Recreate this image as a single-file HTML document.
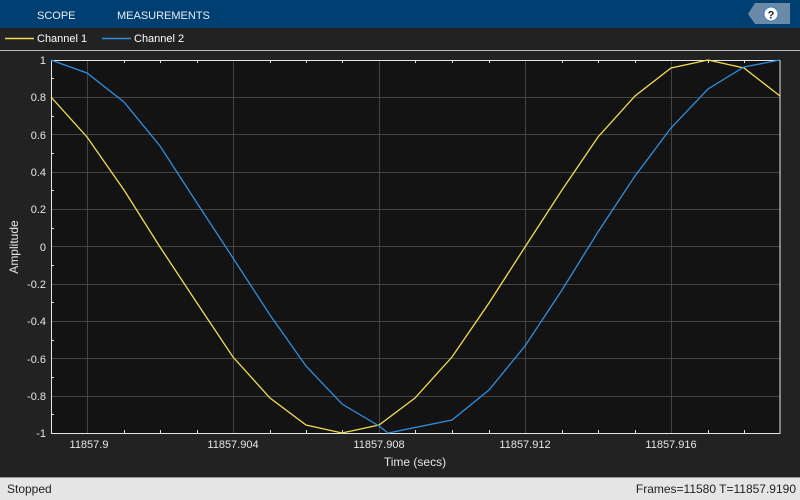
<!DOCTYPE html>
<html><head><style>
html,body{margin:0;width:800px;height:500px;overflow:hidden;background:#222;font-family:"Liberation Sans",sans-serif}
svg{display:block}
</style></head><body>
<svg width="800" height="500" xmlns="http://www.w3.org/2000/svg" font-family="Liberation Sans, sans-serif">
<rect width="800" height="500" fill="#222"/>
<rect width="800" height="28" fill="#003f72"/>
<text x="37" y="19" font-size="11" fill="#e8eef5">SCOPE</text>
<text x="117" y="19" font-size="11" fill="#e8eef5">MEASUREMENTS</text>
<polygon points="748,14 755,3 790,3 790,24 755,24" fill="#6b8aa8"/>
<circle cx="771" cy="14" r="7" fill="#fff" stroke="#3a7fc0" stroke-width="1"/>
<text x="771" y="18.5" font-size="11" font-weight="bold" fill="#222" text-anchor="middle">?</text>
<line x1="5" y1="38.5" x2="34" y2="38.5" stroke="#f3dc4e" stroke-width="1.5"/>
<text x="37" y="42" font-size="11" fill="#fff">Channel 1</text>
<line x1="102" y1="38.5" x2="131" y2="38.5" stroke="#2e8fe0" stroke-width="1.5"/>
<text x="134" y="42" font-size="11" fill="#fff">Channel 2</text>
<line x1="0" y1="50.5" x2="800" y2="50.5" stroke="#bbb" stroke-width="1"/>
<rect x="51" y="60" width="729" height="373" fill="#131313"/>
<g stroke="#444" stroke-width="1">
<line x1="87.5" y1="60" x2="87.5" y2="433"/><line x1="233.5" y1="60" x2="233.5" y2="433"/><line x1="379.5" y1="60" x2="379.5" y2="433"/><line x1="525.5" y1="60" x2="525.5" y2="433"/><line x1="671.5" y1="60" x2="671.5" y2="433"/>
<line x1="51" y1="97.5" x2="780" y2="97.5"/><line x1="51" y1="134.5" x2="780" y2="134.5"/><line x1="51" y1="172.5" x2="780" y2="172.5"/><line x1="51" y1="209.5" x2="780" y2="209.5"/><line x1="51" y1="246.5" x2="780" y2="246.5"/><line x1="51" y1="284.5" x2="780" y2="284.5"/><line x1="51" y1="321.5" x2="780" y2="321.5"/><line x1="51" y1="358.5" x2="780" y2="358.5"/><line x1="51" y1="396.5" x2="780" y2="396.5"/>
</g>
<g stroke="#ddd" stroke-width="1">
<line x1="124.5" y1="433" x2="124.5" y2="430"/><line x1="160.5" y1="433" x2="160.5" y2="430"/><line x1="197.5" y1="433" x2="197.5" y2="430"/><line x1="270.5" y1="433" x2="270.5" y2="430"/><line x1="306.5" y1="433" x2="306.5" y2="430"/><line x1="342.5" y1="433" x2="342.5" y2="430"/><line x1="415.5" y1="433" x2="415.5" y2="430"/><line x1="452.5" y1="433" x2="452.5" y2="430"/><line x1="489.5" y1="433" x2="489.5" y2="430"/><line x1="562.5" y1="433" x2="562.5" y2="430"/><line x1="598.5" y1="433" x2="598.5" y2="430"/><line x1="635.5" y1="433" x2="635.5" y2="430"/><line x1="708.5" y1="433" x2="708.5" y2="430"/><line x1="744.5" y1="433" x2="744.5" y2="430"/>
<line x1="124.5" y1="60" x2="124.5" y2="63"/><line x1="160.5" y1="60" x2="160.5" y2="63"/><line x1="197.5" y1="60" x2="197.5" y2="63"/><line x1="270.5" y1="60" x2="270.5" y2="63"/><line x1="306.5" y1="60" x2="306.5" y2="63"/><line x1="342.5" y1="60" x2="342.5" y2="63"/><line x1="415.5" y1="60" x2="415.5" y2="63"/><line x1="452.5" y1="60" x2="452.5" y2="63"/><line x1="489.5" y1="60" x2="489.5" y2="63"/><line x1="562.5" y1="60" x2="562.5" y2="63"/><line x1="598.5" y1="60" x2="598.5" y2="63"/><line x1="635.5" y1="60" x2="635.5" y2="63"/><line x1="708.5" y1="60" x2="708.5" y2="63"/><line x1="744.5" y1="60" x2="744.5" y2="63"/>
<line x1="51" y1="78.5" x2="54" y2="78.5"/><line x1="51" y1="116.5" x2="54" y2="116.5"/><line x1="51" y1="153.5" x2="54" y2="153.5"/><line x1="51" y1="190.5" x2="54" y2="190.5"/><line x1="51" y1="228.5" x2="54" y2="228.5"/><line x1="51" y1="265.5" x2="54" y2="265.5"/><line x1="51" y1="302.5" x2="54" y2="302.5"/><line x1="51" y1="340.5" x2="54" y2="340.5"/><line x1="51" y1="377.5" x2="54" y2="377.5"/><line x1="51" y1="414.5" x2="54" y2="414.5"/>
</g>
<rect x="51.5" y="60.5" width="728.5" height="373" fill="none" stroke="#e6e6e6" stroke-width="1"/>
<polyline fill="none" stroke="#f3dc4e" stroke-width="1.3" points="51,97 87,137 124,190 160,247 197,303 233,357 270,398 306,425 342,433 379,425 415,398 452,357 489,303 525,247 562,190 598,137 635,96 671,68 708,60 744,68 780,96"/>
<polyline fill="none" stroke="#2e8fe0" stroke-width="1.3" points="51,60 87,73 124,102 160,146 197,203 233,258 270,315 306,366 342,404 379,426 388,433 452,420 489,390 525,346 562,290 598,232 635,176 671,128 708,89 744,67 780,60"/>
<g font-size="11" fill="#e6e6e6" text-anchor="end">
<text x="46" y="64">1</text><text x="46" y="101">0.8</text><text x="46" y="139">0.6</text><text x="46" y="176">0.4</text><text x="46" y="213">0.2</text><text x="46" y="251">0</text><text x="46" y="288">-0.2</text><text x="46" y="325">-0.4</text><text x="46" y="363">-0.6</text><text x="46" y="400">-0.8</text><text x="46" y="437">-1</text>
</g>
<g font-size="11" fill="#e6e6e6" text-anchor="middle">
<text x="89" y="448">11857.9</text><text x="233" y="448">11857.904</text><text x="379" y="448">11857.908</text><text x="525" y="448">11857.912</text><text x="671" y="448">11857.916</text>
</g>
<text x="415" y="466" font-size="12" fill="#e6e6e6" text-anchor="middle">Time (secs)</text>
<text transform="translate(18,247) rotate(-90)" font-size="12" fill="#e6e6e6" text-anchor="middle">Amplitude</text>
<rect x="0" y="477" width="800" height="23" fill="#e5e5e5"/>
<line x1="0" y1="477.5" x2="800" y2="477.5" stroke="#999"/>
<text x="7" y="493" font-size="12" fill="#222">Stopped</text>
<text x="796" y="493" font-size="12" fill="#222" text-anchor="end">Frames=11580  T=11857.9190</text>
</svg>
</body></html>
